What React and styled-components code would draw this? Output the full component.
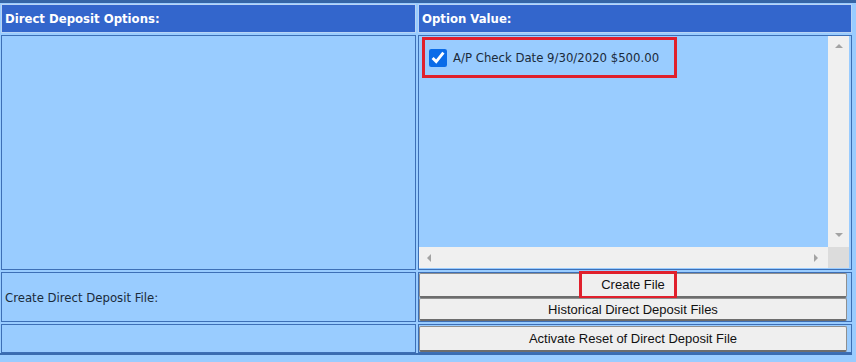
import React from "react";
import styled, { createGlobalStyle } from "styled-components";

const Global = createGlobalStyle`
  html, body { margin: 0; padding: 0; background: #99ccff; }
  body { width: 856px; height: 362px; overflow: hidden; }
`;

const Page = styled.div`
  width: 856px;
  height: 362px;
  background: #99ccff;
  border-top: 3px solid #3565a6;
  box-sizing: border-box;
`;

const Table = styled.div`
  display: grid;
  grid-template-columns: 415px 434px;
  grid-template-rows: 29px 235px 50px 29px;
  gap: 2px;
  padding: 1px 0 0 1px;
  border-bottom: 2px solid #3a6cb0;
  width: 852px;
  box-sizing: border-box;
`;

const HeadCell = styled.div`
  background: #3366cc;
  border: 1px solid #b9d3f3;
  color: #fff;
  font: bold 13px "DejaVu Sans Condensed", "DejaVu Sans", sans-serif;
  display: flex;
  align-items: center;
  padding-left: 3px;
`;

const Cell = styled.div`
  background: #99ccff;
  border: 1px solid #3d6fb6;
  font: 13px "DejaVu Sans Condensed", "DejaVu Sans", sans-serif;
  color: #1a2a3a;
  display: flex;
  flex-direction: column;
  justify-content: ${(p) => (p.$center ? "center" : "flex-start")};
  padding-left: ${(p) => (p.$pad ? "3px" : "0")};
`;

const ScrollBox = styled.div`
  flex: 1;
  display: grid;
  grid-template-columns: 1fr 21px;
  grid-template-rows: 1fr 21px;
  margin: 0 2px 1px 0;
`;

const Content = styled.div`
  padding: 1px 0 0 3px;
`;

const Track = styled.div`
  background: #f0f0f0;
  display: flex;
  flex-direction: ${(p) => (p.$vertical ? "column" : "row")};
  justify-content: space-between;
  align-items: center;
  padding: ${(p) => (p.$vertical ? "8px 0 10px" : "0 10px 0 8px")};
`;

const Corner = styled.div`
  background: #dcdcdc;
`;

const Arrow = styled.span`
  width: 0;
  height: 0;
  border: 4px solid transparent;
  ${(p) => p.$dir === "up" && "border-bottom-color: #a3a3a3; border-top-width: 0;"}
  ${(p) => p.$dir === "down" && "border-top-color: #a3a3a3; border-bottom-width: 0;"}
  ${(p) => p.$dir === "left" && "border-right-color: #a3a3a3; border-left-width: 0;"}
  ${(p) => p.$dir === "right" && "border-left-color: #a3a3a3; border-right-width: 0;"}
`;

const Highlight = styled.label`
  display: inline-flex;
  align-items: center;
  gap: 6px;
  width: 255px;
  height: 41px;
  box-sizing: border-box;
  border: 3px solid #e0202c;
  padding-left: 4px;
  font: 13px "DejaVu Sans Condensed", "DejaVu Sans", sans-serif;
  color: #1a2a3a;
`;

const Check = styled.input`
  width: 18px;
  height: 18px;
  margin: 0;
  accent-color: #0b6ce8;
`;

const Button = styled.button`
  width: 428px;
  height: ${(p) => p.$h || 24}px;
  margin-top: ${(p) => p.$mt || 0}px;
  background: #efefef;
  border: 1px solid #8f8f8f;
  border-bottom: 2px solid #6d6d6d;
  border-radius: 2px;
  font: 13px "Liberation Sans", Arial, sans-serif;
  color: #111;
  display: flex;
  align-items: center;
  justify-content: center;
  padding: 0;
  overflow: visible;
`;

const Marked = styled.span`
  border: 3px solid #e0202c;
  line-height: 14px;
  padding: 4px 9px 4px 19px;
  margin-left: -10px;
`;

export default function App() {
  return (
    <Page>
      <Global />
      <Table>
        <HeadCell>Direct Deposit Options:</HeadCell>
        <HeadCell>Option Value:</HeadCell>

        <Cell />
        <Cell>
          <ScrollBox>
            <Content>
              <Highlight>
                <Check type="checkbox" defaultChecked />
                A/P Check Date 9/30/2020 $500.00
              </Highlight>
            </Content>
            <Track $vertical>
              <Arrow $dir="up" />
              <Arrow $dir="down" />
            </Track>
            <Track>
              <Arrow $dir="left" />
              <Arrow $dir="right" />
            </Track>
            <Corner />
          </ScrollBox>
        </Cell>

        <Cell $center $pad>Create Direct Deposit File:</Cell>
        <Cell>
          <Button $h={25}>
            <Marked>Create File</Marked>
          </Button>
          <Button $h={23}>Historical Direct Deposit Files</Button>
        </Cell>

        <Cell />
        <Cell>
          <Button $h={26} $mt={1}>Activate Reset of Direct Deposit File</Button>
        </Cell>
      </Table>
    </Page>
  );
}
